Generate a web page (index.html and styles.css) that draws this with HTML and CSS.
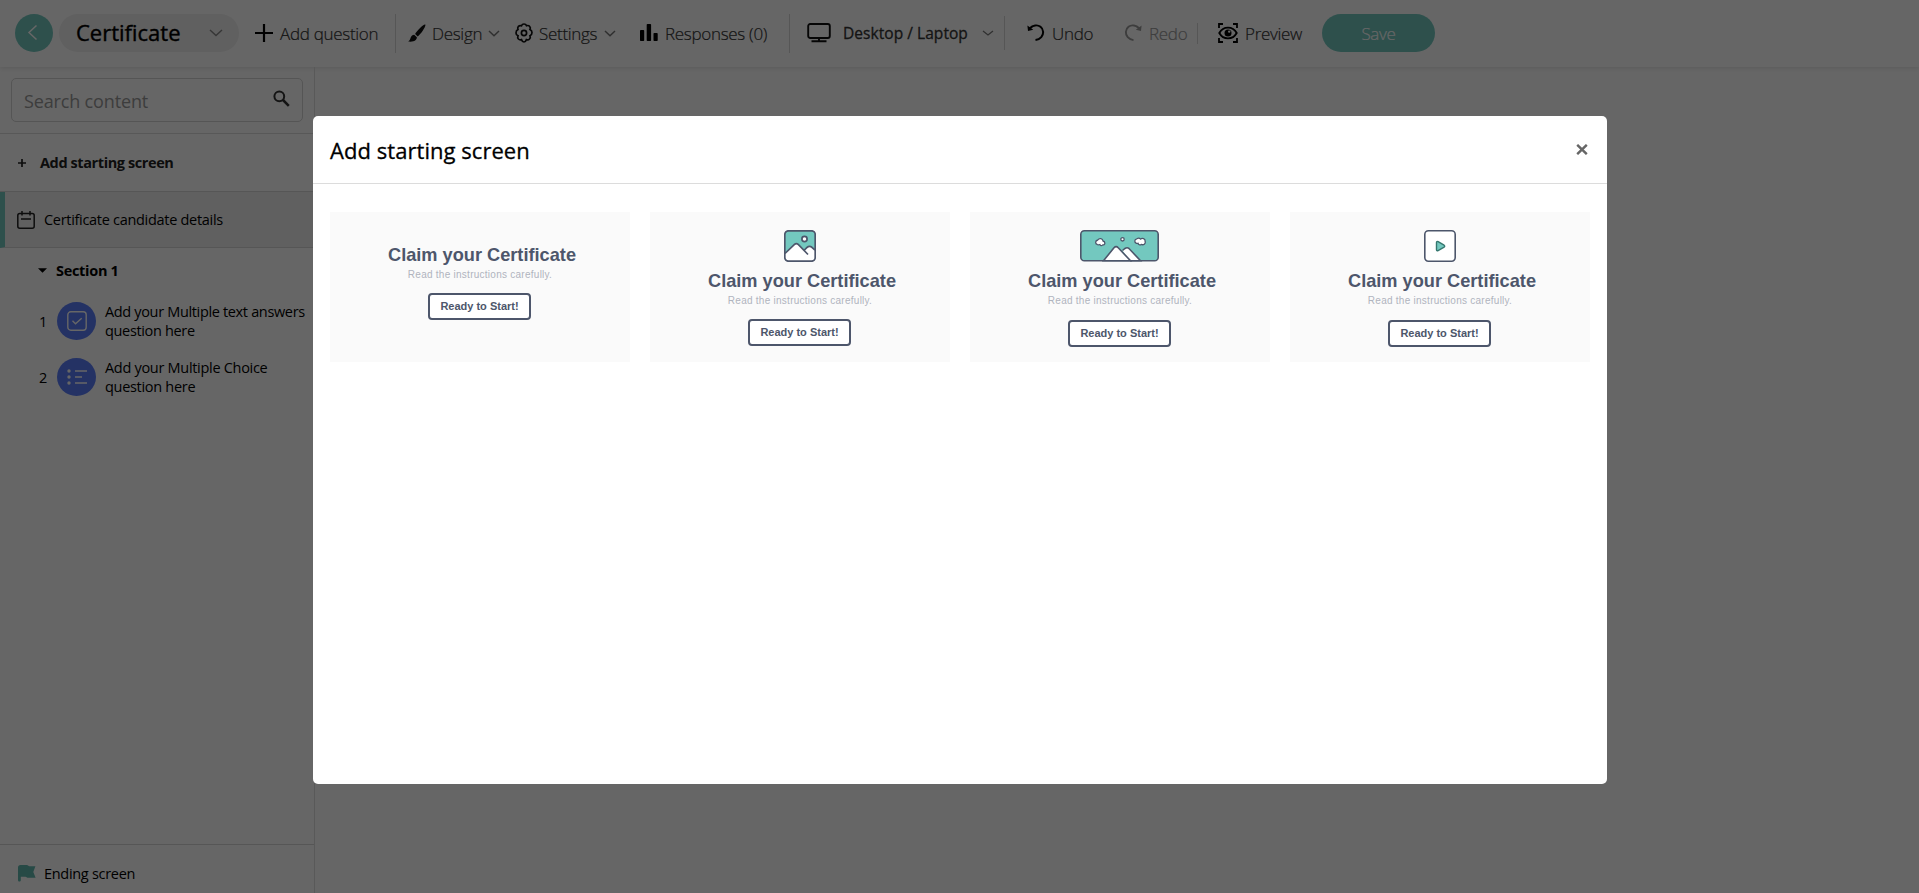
FILE: index.html
```
<!DOCTYPE html>
<html lang="en">
<head>
  <meta charset="UTF-8">
  <title>Certificate</title>
  <meta name="viewport" content="width=device-width, initial-scale=1.0">
  <link rel="stylesheet" href="styles.css">
</head>
<body>
  <div class="app">
    <header class="topbar">
      <div class="back">
        <svg width="38" height="38" viewBox="0 0 38 38"><path d="M21.500 11.500l-7.500 7 7.500 7" fill="none" stroke="#fff" stroke-width="1.500"/></svg>
      </div>
      <div class="pill">
        <span class="pill-name">Certificate</span>
        <svg width="14" height="8" viewBox="0 0 14 8"><path d="M1 1l6 5.500L13 1" fill="none" stroke="#888" stroke-width="1.500"/></svg>
      </div>
      <div class="tool tool-add">
        <svg width="18" height="18" viewBox="0 0 18 18"><path d="M9 0v18M0 9h18" stroke="#000" stroke-width="2.200"/></svg>
        <span>Add question</span>
      </div>
      <div class="divider"></div>
      <div class="tool tool-design">
        <svg width="18" height="18" viewBox="0 0 18 18"><path d="M17.300.6c-.7-.6-3 1.200-5 3.200-2.300 2.200-4.600 5-5.200 6.200l2.600 2.400c1.300-.8 3.400-3.300 5.200-5.900 1.700-2.400 3-5.300 2.400-5.900z" fill="#111"/><path d="M6.200 10.700l2.700 2.500c.1 1.700-1.400 3.500-3.600 4.100-1.800.5-4 .3-5.200.2 1.800-.9 2-2.300 2.600-4 .6-1.600 1.900-2.700 3.500-2.800z" fill="#111"/></svg>
        <span>Design</span>
        <svg class="chev" width="12" height="7" viewBox="0 0 12 7"><path d="M1 1l5 4.800L11 1" fill="none" stroke="#777" stroke-width="1.500"/></svg>
      </div>
      <div class="tool tool-settings">
        <svg width="18" height="20" viewBox="0 0 18 20"><path d="M9 1c1.300 0 2 .5 2.500 1.700 1.300-.4 2.300-.3 3.100.6.9.9 1 2 .4 3.200 1.300.6 2 1.600 2 3s-.7 2.700-2 3.300c.5 1.200.4 2.300-.5 3.200-.8.900-1.900 1.100-3.100.6C10.900 18 10.200 19 9 19s-2-1-2.500-2.400c-1.200.5-2.200.3-3.100-.6-.8-.9-.9-2-.4-3.200C1.700 12.200 1 11.300 1 9.900s.7-2.700 2-3.300c-.5-1.200-.4-2.300.4-3.200.9-.9 1.900-1.100 3.100-.6C7 1.500 7.700 1 9 1z" fill="none" stroke="#111" stroke-width="1.700"/><circle cx="9" cy="10" r="2.600" fill="none" stroke="#111" stroke-width="1.700"/></svg>
        <span>Settings</span>
        <svg class="chev" width="12" height="7" viewBox="0 0 12 7"><path d="M1 1l5 4.800L11 1" fill="none" stroke="#777" stroke-width="1.500"/></svg>
      </div>
      <div class="tool tool-responses">
        <svg width="18" height="18" viewBox="0 0 18 18"><rect x="0" y="6" width="4.200" height="11" rx=".8"/><rect x="6.700" y="0" width="4.400" height="17" rx=".8"/><rect x="13.500" y="9" width="4.200" height="8" rx=".8"/></svg>
        <span>Responses (0)</span>
      </div>
      <div class="divider"></div>
      <div class="tool tool-device">
        <svg width="24" height="20" viewBox="0 0 24 20"><rect x="1.200" y="1" width="21.600" height="14" rx="2" fill="none" stroke="#111" stroke-width="1.900"/><path d="M12 15v3M4.500 18.200h15" stroke="#111" stroke-width="1.900"/></svg>
        <span>Desktop / Laptop</span>
        <svg class="chev" width="12" height="7" viewBox="0 0 12 7"><path d="M1 1l5 4L11 1" fill="none" stroke="#777" stroke-width="1.300"/></svg>
      </div>
      <div class="divider divider-mid"></div>
      <div class="tool tool-undo">
        <svg width="18" height="18" viewBox="0 0 18 18"><path d="M2.500 4.500C6 1.200 10.500.4 13.500 2.800c3.200 2.500 3.500 7.300.8 10.300-1.500 1.700-3.500 2.700-5.800 3" fill="none" stroke="#000" stroke-width="2"/><path d="M.4 1.500L1 7l5.200-1.200z"/></svg>
        <span>Undo</span>
      </div>
      <div class="tool tool-redo">
        <svg width="18" height="18" viewBox="0 0 18 18"><g transform="translate(18 0) scale(-1 1)"><path d="M2.500 4.500C6 1.200 10.500.4 13.500 2.800c3.200 2.500 3.500 7.300.8 10.300-1.500 1.700-3.500 2.700-5.800 3" fill="none" stroke="#999" stroke-width="1.900"/><path d="M.4 1.500L1 7l5.200-1.200z" fill="#999"/></g></svg>
        <span>Redo</span>
      </div>
      <div class="divider divider-short"></div>
      <div class="tool tool-preview">
        <svg width="20" height="20" viewBox="0 0 20 20"><g fill="none" stroke="#000"><path d="M1 5V1h4M15 1h4v4M19 15v4h-4M5 19H1v-4" stroke-width="1.800"/><path d="M1.300 10c2-3.600 5-5.400 8.700-5.400s6.700 1.800 8.700 5.400c-2 3.600-5 5.400-8.700 5.400S3.300 13.600 1.300 10z" stroke-width="1.900"/></g><circle cx="10" cy="10" r="3.500"/><circle cx="11.200" cy="8.600" r="1.200" fill="#fff"/></svg>
        <span>Preview</span>
      </div>
      <div class="save">Save</div>
    </header>

    <aside class="sidebar">
      <div class="search-wrap">
        <div class="search">
          <span>Search content</span>
          <svg width="17" height="17" viewBox="0 0 17 17"><circle cx="6.300" cy="6.300" r="4.900" fill="none" stroke="#333" stroke-width="2"/><path d="M10 10l5.800 5.800" stroke="#333" stroke-width="2.500"/></svg>
        </div>
      </div>
      <div class="row row-start">
        <svg width="8" height="8" viewBox="0 0 8 8"><path d="M4 0v8M0 4h8" stroke="#222" stroke-width="1.700"/></svg>
        <span>Add starting screen</span>
      </div>
      <div class="row row-active">
        <svg width="18" height="18" viewBox="0 0 18 18"><g fill="none" stroke="#222" stroke-width="1.500"><rect x=".8" y="2.500" width="16.400" height="14.700" rx="2"/><path d="M5 0v4.500M13 0v4.500M4 8h10"/></g></svg>
        <span>Certificate candidate details</span>
      </div>
      <div class="section">
        <svg width="9" height="5" viewBox="0 0 8 4"><path d="M0 0h8L4 4z"/></svg>
        <span>Section 1</span>
      </div>
      <div class="question">
        <span class="num">1</span>
        <div class="q-icon">
          <svg width="20" height="20" viewBox="0 0 20 20"><g fill="none" stroke="#fff" stroke-width="1.400"><rect x=".8" y=".8" width="18.400" height="18.400" rx="3"/><path d="M5.500 9.800l3 2.900 6.200-5.400"/></g></svg>
        </div>
        <div class="q-text q-wide">Add your Multiple text answers<br>question here</div>
      </div>
      <div class="question">
        <span class="num">2</span>
        <div class="q-icon">
          <svg width="20" height="16" viewBox="0 0 20 16"><g fill="#fff"><circle cx="2" cy="2" r="1.700"/><circle cx="2" cy="8" r="1.700"/><circle cx="2" cy="14" r="1.700"/></g><path d="M8 2h12M8 8h7M8 14h12" stroke="#fff" stroke-width="1.400"/></svg>
        </div>
        <div class="q-text">Add your Multiple Choice<br>question here</div>
      </div>
      <div class="row row-end">
        <svg width="18" height="17" viewBox="0 0 18 17"><path d="M0 2.500C0 .9.800 0 2.500 0h6.300c1.200 0 1.500 1.200 2.600 1.200h6L15.300 7l2.300 5.700H9.500c-.8 0-1-.9-2-.9H2.800V15c0 2-2.800 2-2.800 0z" fill="#63b8ae"/></svg>
        <span>Ending screen</span>
      </div>
    </aside>
  </div>

  <div class="overlay">
    <div class="modal">
      <div class="modal-header">
        <h1 class="modal-title">Add starting screen</h1>
        <svg class="close" width="12" height="11" viewBox="0 0 12 11"><path d="M1.200.8l9.600 9.400M10.800.8L1.200 10.200" stroke="#666" stroke-width="2.400"/></svg>
      </div>
      <div class="cards">
        <div class="card card-plain">
          <div class="card-title">Claim your Certificate</div>
          <div class="card-sub">Read the instructions carefully.</div>
          <div class="card-btn">Ready to Start!</div>
        </div>
        <div class="card card-image">
          <svg width="32" height="32" viewBox="0 0 32 32"><rect x=".8" y=".8" width="30.400" height="30.400" rx="3.600" fill="#73c8bf"/><path d="M1 23.500l9.500-9.200c1.300-1.100 2.400-1.100 3.700 0l6.300 6 2.500-2.800c1.600-1.300 3.300-1.300 4.900-.2l3.100 2.700v7.700c0 2-1.500 3.500-3.500 3.500h-23C2.500 31.200 1 29.700 1 27.700z" fill="#fff"/><g fill="none" stroke="#4d566b" stroke-width="1.700"><path d="M1 23.500l9.500-9.200c1.300-1.100 2.400-1.100 3.700 0L24 24.500M20.500 20l2.500-2.500c1.600-1.300 3.300-1.300 4.900-.2l3.100 2.700"/><circle cx="20.500" cy="9" r="2.600" fill="#fff"/><rect x=".8" y=".8" width="30.400" height="30.400" rx="3.600"/></g></svg>
          <div class="card-title">Claim your Certificate</div>
          <div class="card-sub">Read the instructions carefully.</div>
          <div class="card-btn">Ready to Start!</div>
        </div>
        <div class="card card-wide">
          <svg width="79" height="32" viewBox="0 0 79 32"><g stroke="#4d566b" stroke-width="1.600"><rect x=".8" y=".8" width="77.400" height="30" rx="3.600" fill="#73c8bf"/><path d="M42.500 20.500l2.500-2c1.500-1 2.700-1 4 0l11.500 12.300H50" fill="#fff"/><path d="M23.500 30.800L34 17.700c1.400-1.500 2.800-1.500 4.200 0l12.300 13.100z" fill="#fff"/><g fill="#fff" stroke-width="1.300"><circle cx="42.500" cy="9.300" r="1.700"/><path d="M17.500 14.700c-2.500-.7-2.600-4 .3-4.700 1.500-2.200 4.800-1.500 5.200 1 2.600.7 2.400 4.200-.2 3.900-1.300 1.400-2.400.8-3-.4-.8.300-1.500.4-2.300.2zM56.500 13.400c-2.300-.7-2.300-4 .3-4.600 1.500-1 2.800-.8 3.800.3 1.600-1.500 4.800-.4 4.500 2.100 1 2.500-1.800 4.300-3.800 3.200-1.300 1-3 .3-3.200-1.100-.6.200-1.200.2-1.600.1z"/></g></g></svg>
          <div class="card-title">Claim your Certificate</div>
          <div class="card-sub">Read the instructions carefully.</div>
          <div class="card-btn">Ready to Start!</div>
        </div>
        <div class="card card-video">
          <svg width="32" height="32" viewBox="0 0 32 32"><rect x=".8" y=".8" width="30.400" height="30.400" rx="3.600" fill="#fff" stroke="#4d566b" stroke-width="1.600"/><path d="M12.500 12.500c0-1 .8-1.300 1.600-.9l6 3.600c.8.600.8 1.400 0 1.900l-6 3.500c-.9.400-1.600 0-1.600-.9z" fill="#73c8bf" stroke="#35776f" stroke-width="1.400"/></svg>
          <div class="card-title">Claim your Certificate</div>
          <div class="card-sub">Read the instructions carefully.</div>
          <div class="card-btn">Ready to Start!</div>
        </div>
      </div>
    </div>
  </div>
</body>
</html>
```
FILE: styles.css
```
* {
  box-sizing: border-box;
}
body {
  margin: 0;
  font-family: "Segoe UI", "Open Sans", "Noto Sans", sans-serif;
  background-color: #fff;
  color: #000;
  overflow: hidden;
}
svg {
  display: block;
  flex: none;
}
.app {
  height: 893px;
  display: flex;
  flex-direction: column;
}

/* Top bar */
.topbar {
  height: 67px;
  flex: none;
  display: flex;
  align-items: center;
  padding: 0 0 1px 15px;
  box-shadow: 0 1px 5px rgba(0,0,0,0.12);
}
.back {
  width: 38px;
  height: 38px;
  border-radius: 50%;
  background: #73c8bf;
}
.pill {
  width: 180px;
  flex: none;
  height: 38px;
  margin-left: 6px;
  padding: 0 16px 0 17px;
  border-radius: 19px;
  background: #f0f0f0;
  display: flex;
  align-items: center;
  justify-content: space-between;
}
.pill-name {
  font-size: 22px;
  font-weight: 500;
  -webkit-text-stroke: 0.4px #000;
  margin-top: -2px;
}
.tool {
  display: flex;
  align-items: center;
  gap: 7px;
  flex: none;
  font-size: 17px;
  font-weight: 300;
  letter-spacing: -0.3px;
  -webkit-text-stroke: 0.2px;
  color: #333;
  white-space: nowrap;
}
.tool .chev {
  margin-left: -2px;
}
.divider {
  width: 1px;
  height: 39px;
  background: #d6d6d6;
}
.divider-mid {
  height: 34px;
}
.divider-short {
  height: 21px;
}
.tool-add {
  width: 140px;
  margin-left: 16px;
}
.tool-design {
  width: 107px;
  margin-left: 12px;
  gap: 6px;
}
.tool-design .chev {
  margin-left: 0;
}
.tool-settings {
  width: 125px;
  gap: 6px;
}
.tool-settings .chev {
  margin-left: 1px;
}
.tool-responses {
  width: 149px;
}
.tool-device {
  width: 197px;
  margin-left: 17px;
  gap: 12px;
  font-size: 15.5px;
  font-weight: 500;
  letter-spacing: 0.05px;
  -webkit-text-stroke: 0.3px;
}
.tool-device .chev {
  margin-left: 2px;
}
.tool-undo {
  width: 97px;
  margin-left: 22px;
}
.tool-redo {
  width: 73px;
  color: #999;
}
.tool-preview {
  width: 104px;
  margin-left: 20px;
}
.save {
  width: 113px;
  height: 38px;
  border-radius: 19px;
  background: #73c8bf;
  color: #fff;
  font-size: 17px;
  font-weight: 300;
  line-height: 39px;
  letter-spacing: -0.3px;
  -webkit-text-stroke: 0.2px;
  text-align: center;
}

/* Sidebar */
.sidebar {
  width: 315px;
  flex: 1;
  display: flex;
  flex-direction: column;
  border-right: 1px solid #dfdfdf;
  font-size: 14.5px;
  letter-spacing: -0.3px;
}
.search-wrap {
  padding: 11px 11px;
  height: 67px;
  border-bottom: 1px solid #dcdcdc;
}
.search {
  height: 44px;
  width: 292px;
  padding: 2px 12px 0 12px;
  border: 1px solid #d4d4d4;
  border-radius: 5px;
  display: flex;
  justify-content: space-between;
  align-items: center;
  font-size: 18px;
  letter-spacing: -0.15px;
  color: #999;
}
.search svg {
  margin-top: -5px;
}
.row {
  display: flex;
  align-items: center;
  flex: none;
}
.row-start {
  height: 58px;
  padding-left: 18px;
  gap: 14px;
  font-weight: 700;
  letter-spacing: -0.4px;
  color: #222;
  border-bottom: 1px solid #d8d8d8;
}
.row-active {
  height: 56px;
  padding-left: 12px;
  gap: 9px;
  background: #f0f0f0;
  border-left: 5px solid #73c8bf;
  border-bottom: 1px solid #d8d8d8;
}
.section {
  display: flex;
  align-items: center;
  gap: 9px;
  height: 44px;
  padding-left: 38px;
  font-weight: 700;
  margin-bottom: 10px;
}
.question {
  display: flex;
  align-items: center;
  height: 38px;
  margin-bottom: 18px;
}
.num {
  width: 57px;
  padding-left: 39px;
}
.q-icon {
  width: 39px;
  height: 38px;
  border-radius: 50%;
  background: #5a7dfa;
  display: flex;
  align-items: center;
  justify-content: center;
}
.q-text {
  margin-left: 9px;
  line-height: 19px;
  white-space: nowrap;
}
.q-wide {
  letter-spacing: -0.34px;
}
.row-end {
  margin-top: auto;
  height: 49px;
  padding: 8px 0 0 18px;
  gap: 8px;
  border-top: 1px solid #d8d8d8;
}

/* Modal */
.overlay {
  position: fixed;
  inset: 0;
  background: rgba(0,0,0,0.6);
  display: flex;
  align-items: flex-start;
  padding: 116px 0 0 313px;
}
.modal {
  width: 1294px;
  height: 668px;
  background: #fff;
  border-radius: 5px;
}
.modal-header {
  height: 68px;
  display: flex;
  justify-content: space-between;
  align-items: center;
  padding: 0 19px 0 17px;
  border-bottom: 1px solid #dcdcdc;
}
.modal-title {
  margin: 0;
  font-size: 22px;
  font-weight: 500;
  letter-spacing: 0.05px;
  -webkit-text-stroke: 0.3px #000;
}
.close {
  margin-top: -1px;
}
.cards {
  display: grid;
  grid-template-columns: repeat(4, 300px);
  gap: 20px;
  padding: 28px 17px;
}
.card {
  height: 150px;
  background: #fafafa;
  display: flex;
  flex-direction: column;
  align-items: center;
  padding-top: 18px;
  font-family: Helvetica, "Liberation Sans", Arial, sans-serif;
  color: #4d566b;
  white-space: nowrap;
}
.card-plain {
  padding-top: 32px;
}
.card-title {
  font-size: 18.2px;
  font-weight: bold;
  line-height: 22px;
  padding-left: 4px;
}
.card-sub {
  font-size: 10px;
  letter-spacing: 0.26px;
  line-height: 12px;
  margin-top: 3px;
  color: #b0b4be;
}
.card-btn {
  width: 103px;
  height: 27px;
  margin: 12px 1px 0 0;
  border: 2px solid #4d566b;
  border-radius: 4px;
  background: #fff;
  font-size: 11px;
  font-weight: bold;
  line-height: 23px;
  text-align: center;
}
.card-image .card-title,
.card-wide .card-title,
.card-video .card-title {
  margin-top: 8px;
}
.card-wide svg {
  margin-right: 1px;
}
.card-wide .card-btn,
.card-video .card-btn {
  margin-top: 13px;
}
```
